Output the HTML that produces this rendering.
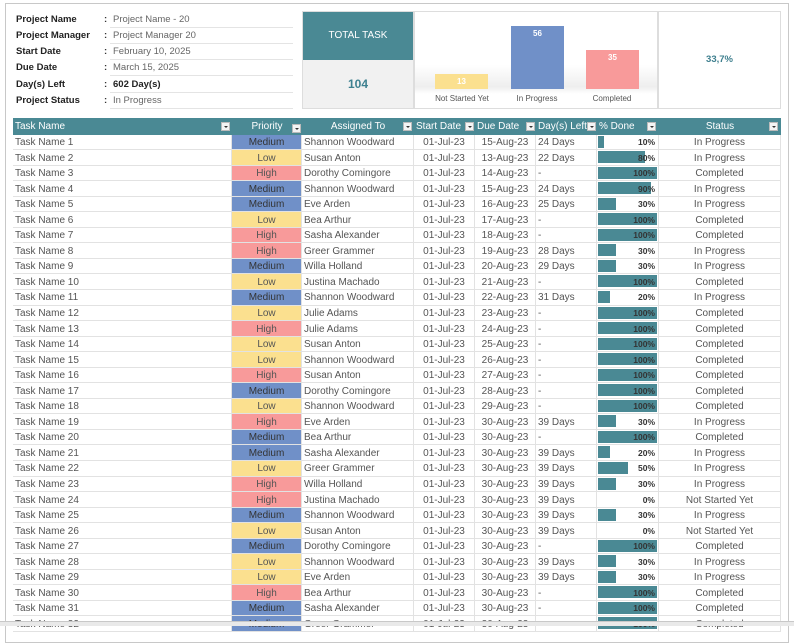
<!DOCTYPE html>
<html><head><meta charset="utf-8"><style>
*{box-sizing:border-box;margin:0;padding:0}
body{width:794px;height:626px;background:#fff;font-family:"Liberation Sans",sans-serif;overflow:hidden;position:relative;color:#555}
.frame{position:absolute;left:5px;top:3px;width:784px;height:640px;border:1px solid #c8c8c8}
.lab{position:absolute;left:16px;font-weight:bold;color:#222;font-size:9.5px}
.col{position:absolute;left:104px;font-weight:bold;color:#333;font-size:9.5px}
.val{position:absolute;left:113px;color:#666;font-size:9.5px}
.ul{position:absolute;left:110px;width:183px;height:1px;background:#e4e4e4}
.tt{position:absolute;left:302px;top:11px;width:112px;height:98px;border:1px solid #ddd}
.tt .a{height:48px;background:#4a8994;color:#fff;font-size:10px;text-align:center;line-height:48px}
.tt .b{height:48px;background:#f1f1f1;color:#3e8190;font-weight:bold;font-size:12px;text-align:center;line-height:48px}
.ch{position:absolute;left:414px;top:11px;width:244px;height:98px;border:1px solid #ddd;background:linear-gradient(#fff 55%,#eee 78%,#fff 85%)}
.bar{position:absolute;color:#fff;font-size:8px;font-weight:bold;text-align:center;padding-top:3px}
.bl{position:absolute;top:82px;font-size:8px;color:#555;text-align:center;width:80px}
.pc{position:absolute;left:658px;top:11px;width:123px;height:98px;border:1px solid #ddd;color:#3e7f8e;font-weight:bold;font-size:9.5px;text-align:center;line-height:96px}
.tbl{position:absolute;left:13px;top:118px;width:768px}
.hd{height:16.5px;background:#4a8994;color:#fff;font-size:10px;display:flex;position:relative}
.hd div{line-height:17px;position:relative}
.dd{position:absolute;top:4px;width:9px;height:9px;background:#f4f4f4;border:1px solid #bbb}
.dd:after{content:"";position:absolute;left:2px;top:3px;border:2px solid transparent;border-top:2.5px solid #333}
.r{height:15.55px;display:flex;font-size:10px;border-bottom:1px solid #e2e2e2;line-height:15px;color:#555}
.r div{border-right:1px solid #e2e2e2;white-space:nowrap;overflow:hidden;padding-top:0.5px}
.c1{width:219px;padding-left:2px}.c2{width:70px;text-align:center}.c3{width:112px;padding-left:2px}.c4{width:61px;text-align:center}.c5{width:61px;text-align:center}.c6{width:61px;padding-left:2px}.c7{width:62px;position:relative;text-align:right;padding-right:3px;font-weight:bold;color:#333;font-size:8.5px}.c8{width:122px;text-align:center}
.M{background:#7090c8;color:#333}.L{background:#fbe08f}.H{background:#f89a9a}
.c7 i{position:absolute;left:1px;top:1px;height:12px;background:#4a8994}
.c7 span{position:relative}
</style></head><body>
<div class="frame"></div>
<div class="lab" style="top:14px">Project Name</div><div class="col" style="top:14px">:</div><div class="val" style="top:14px">Project Name - 20</div><div class="ul" style="top:27px"></div>
<div class="lab" style="top:30px">Project Manager</div><div class="col" style="top:30px">:</div><div class="val" style="top:30px">Project Manager 20</div><div class="ul" style="top:43px"></div>
<div class="lab" style="top:46px">Start Date</div><div class="col" style="top:46px">:</div><div class="val" style="top:46px">February 10, 2025</div><div class="ul" style="top:59px"></div>
<div class="lab" style="top:62px">Due Date</div><div class="col" style="top:62px">:</div><div class="val" style="top:62px">March 15, 2025</div><div class="ul" style="top:75px"></div>
<div class="lab" style="top:79px">Day(s) Left</div><div class="col" style="top:79px">:</div><div class="val" style="top:79px;font-weight:bold;color:#222">602 Day(s)</div><div class="ul" style="top:92px"></div>
<div class="lab" style="top:95px">Project Status</div><div class="col" style="top:95px">:</div><div class="val" style="top:95px">In Progress</div><div class="ul" style="top:108px"></div>
<div class="tt"><div class="a">TOTAL TASK</div><div class="b">104</div></div>
<div class="ch">
<div class="bar" style="left:20px;top:62px;width:53px;height:15px;background:#fbe08f">13</div>
<div class="bar" style="left:96px;top:14px;width:53px;height:63px;background:#7090c8">56</div>
<div class="bar" style="left:171px;top:38px;width:53px;height:39px;background:#f89a9a">35</div>
<div class="bl" style="left:7px">Not Started Yet</div>
<div class="bl" style="left:82px">In Progress</div>
<div class="bl" style="left:157px">Completed</div>
</div>
<div class="pc">33,7%</div>
<div class="tbl">
<div class="hd">
<div style="width:219px;padding-left:2px">Task Name<span class="dd" style="left:208px"></span></div>
<div style="width:70px;text-align:center">Priority<span class="dd" style="left:60px;top:6px"></span></div>
<div style="width:112px;text-align:center">Assigned To<span class="dd" style="left:101px"></span></div>
<div style="width:61px;padding-left:2px">Start Date<span class="dd" style="left:51px"></span></div>
<div style="width:61px;padding-left:2px">Due Date<span class="dd" style="left:51px"></span></div>
<div style="width:61px;padding-left:2px">Day(s) Left<span class="dd" style="left:51px"></span></div>
<div style="width:62px;padding-left:2px">% Done<span class="dd" style="left:50px"></span></div>
<div style="width:122px;text-align:center">Status<span class="dd" style="left:110px"></span></div>
</div>
<div class="r"><div class="c1">Task Name 1</div><div class="c2 M">Medium</div><div class="c3">Shannon Woodward</div><div class="c4">01-Jul-23</div><div class="c5">15-Aug-23</div><div class="c6">24 Days</div><div class="c7"><i style="width:6px"></i><span>10%</span></div><div class="c8">In Progress</div></div>
<div class="r"><div class="c1">Task Name 2</div><div class="c2 L">Low</div><div class="c3">Susan Anton</div><div class="c4">01-Jul-23</div><div class="c5">13-Aug-23</div><div class="c6">22 Days</div><div class="c7"><i style="width:47px"></i><span>80%</span></div><div class="c8">In Progress</div></div>
<div class="r"><div class="c1">Task Name 3</div><div class="c2 H">High</div><div class="c3">Dorothy Comingore</div><div class="c4">01-Jul-23</div><div class="c5">14-Aug-23</div><div class="c6">-</div><div class="c7"><i style="width:59px"></i><span>100%</span></div><div class="c8">Completed</div></div>
<div class="r"><div class="c1">Task Name 4</div><div class="c2 M">Medium</div><div class="c3">Shannon Woodward</div><div class="c4">01-Jul-23</div><div class="c5">15-Aug-23</div><div class="c6">24 Days</div><div class="c7"><i style="width:53px"></i><span>90%</span></div><div class="c8">In Progress</div></div>
<div class="r"><div class="c1">Task Name 5</div><div class="c2 M">Medium</div><div class="c3">Eve Arden</div><div class="c4">01-Jul-23</div><div class="c5">16-Aug-23</div><div class="c6">25 Days</div><div class="c7"><i style="width:18px"></i><span>30%</span></div><div class="c8">In Progress</div></div>
<div class="r"><div class="c1">Task Name 6</div><div class="c2 L">Low</div><div class="c3">Bea Arthur</div><div class="c4">01-Jul-23</div><div class="c5">17-Aug-23</div><div class="c6">-</div><div class="c7"><i style="width:59px"></i><span>100%</span></div><div class="c8">Completed</div></div>
<div class="r"><div class="c1">Task Name 7</div><div class="c2 H">High</div><div class="c3">Sasha Alexander</div><div class="c4">01-Jul-23</div><div class="c5">18-Aug-23</div><div class="c6">-</div><div class="c7"><i style="width:59px"></i><span>100%</span></div><div class="c8">Completed</div></div>
<div class="r"><div class="c1">Task Name 8</div><div class="c2 H">High</div><div class="c3">Greer Grammer</div><div class="c4">01-Jul-23</div><div class="c5">19-Aug-23</div><div class="c6">28 Days</div><div class="c7"><i style="width:18px"></i><span>30%</span></div><div class="c8">In Progress</div></div>
<div class="r"><div class="c1">Task Name 9</div><div class="c2 M">Medium</div><div class="c3">Willa Holland</div><div class="c4">01-Jul-23</div><div class="c5">20-Aug-23</div><div class="c6">29 Days</div><div class="c7"><i style="width:18px"></i><span>30%</span></div><div class="c8">In Progress</div></div>
<div class="r"><div class="c1">Task Name 10</div><div class="c2 L">Low</div><div class="c3">Justina Machado</div><div class="c4">01-Jul-23</div><div class="c5">21-Aug-23</div><div class="c6">-</div><div class="c7"><i style="width:59px"></i><span>100%</span></div><div class="c8">Completed</div></div>
<div class="r"><div class="c1">Task Name 11</div><div class="c2 M">Medium</div><div class="c3">Shannon Woodward</div><div class="c4">01-Jul-23</div><div class="c5">22-Aug-23</div><div class="c6">31 Days</div><div class="c7"><i style="width:12px"></i><span>20%</span></div><div class="c8">In Progress</div></div>
<div class="r"><div class="c1">Task Name 12</div><div class="c2 L">Low</div><div class="c3">Julie Adams</div><div class="c4">01-Jul-23</div><div class="c5">23-Aug-23</div><div class="c6">-</div><div class="c7"><i style="width:59px"></i><span>100%</span></div><div class="c8">Completed</div></div>
<div class="r"><div class="c1">Task Name 13</div><div class="c2 H">High</div><div class="c3">Julie Adams</div><div class="c4">01-Jul-23</div><div class="c5">24-Aug-23</div><div class="c6">-</div><div class="c7"><i style="width:59px"></i><span>100%</span></div><div class="c8">Completed</div></div>
<div class="r"><div class="c1">Task Name 14</div><div class="c2 L">Low</div><div class="c3">Susan Anton</div><div class="c4">01-Jul-23</div><div class="c5">25-Aug-23</div><div class="c6">-</div><div class="c7"><i style="width:59px"></i><span>100%</span></div><div class="c8">Completed</div></div>
<div class="r"><div class="c1">Task Name 15</div><div class="c2 L">Low</div><div class="c3">Shannon Woodward</div><div class="c4">01-Jul-23</div><div class="c5">26-Aug-23</div><div class="c6">-</div><div class="c7"><i style="width:59px"></i><span>100%</span></div><div class="c8">Completed</div></div>
<div class="r"><div class="c1">Task Name 16</div><div class="c2 H">High</div><div class="c3">Susan Anton</div><div class="c4">01-Jul-23</div><div class="c5">27-Aug-23</div><div class="c6">-</div><div class="c7"><i style="width:59px"></i><span>100%</span></div><div class="c8">Completed</div></div>
<div class="r"><div class="c1">Task Name 17</div><div class="c2 M">Medium</div><div class="c3">Dorothy Comingore</div><div class="c4">01-Jul-23</div><div class="c5">28-Aug-23</div><div class="c6">-</div><div class="c7"><i style="width:59px"></i><span>100%</span></div><div class="c8">Completed</div></div>
<div class="r"><div class="c1">Task Name 18</div><div class="c2 L">Low</div><div class="c3">Shannon Woodward</div><div class="c4">01-Jul-23</div><div class="c5">29-Aug-23</div><div class="c6">-</div><div class="c7"><i style="width:59px"></i><span>100%</span></div><div class="c8">Completed</div></div>
<div class="r"><div class="c1">Task Name 19</div><div class="c2 H">High</div><div class="c3">Eve Arden</div><div class="c4">01-Jul-23</div><div class="c5">30-Aug-23</div><div class="c6">39 Days</div><div class="c7"><i style="width:18px"></i><span>30%</span></div><div class="c8">In Progress</div></div>
<div class="r"><div class="c1">Task Name 20</div><div class="c2 M">Medium</div><div class="c3">Bea Arthur</div><div class="c4">01-Jul-23</div><div class="c5">30-Aug-23</div><div class="c6">-</div><div class="c7"><i style="width:59px"></i><span>100%</span></div><div class="c8">Completed</div></div>
<div class="r"><div class="c1">Task Name 21</div><div class="c2 M">Medium</div><div class="c3">Sasha Alexander</div><div class="c4">01-Jul-23</div><div class="c5">30-Aug-23</div><div class="c6">39 Days</div><div class="c7"><i style="width:12px"></i><span>20%</span></div><div class="c8">In Progress</div></div>
<div class="r"><div class="c1">Task Name 22</div><div class="c2 L">Low</div><div class="c3">Greer Grammer</div><div class="c4">01-Jul-23</div><div class="c5">30-Aug-23</div><div class="c6">39 Days</div><div class="c7"><i style="width:30px"></i><span>50%</span></div><div class="c8">In Progress</div></div>
<div class="r"><div class="c1">Task Name 23</div><div class="c2 H">High</div><div class="c3">Willa Holland</div><div class="c4">01-Jul-23</div><div class="c5">30-Aug-23</div><div class="c6">39 Days</div><div class="c7"><i style="width:18px"></i><span>30%</span></div><div class="c8">In Progress</div></div>
<div class="r"><div class="c1">Task Name 24</div><div class="c2 H">High</div><div class="c3">Justina Machado</div><div class="c4">01-Jul-23</div><div class="c5">30-Aug-23</div><div class="c6">39 Days</div><div class="c7"><span>0%</span></div><div class="c8">Not Started Yet</div></div>
<div class="r"><div class="c1">Task Name 25</div><div class="c2 M">Medium</div><div class="c3">Shannon Woodward</div><div class="c4">01-Jul-23</div><div class="c5">30-Aug-23</div><div class="c6">39 Days</div><div class="c7"><i style="width:18px"></i><span>30%</span></div><div class="c8">In Progress</div></div>
<div class="r"><div class="c1">Task Name 26</div><div class="c2 L">Low</div><div class="c3">Susan Anton</div><div class="c4">01-Jul-23</div><div class="c5">30-Aug-23</div><div class="c6">39 Days</div><div class="c7"><span>0%</span></div><div class="c8">Not Started Yet</div></div>
<div class="r"><div class="c1">Task Name 27</div><div class="c2 M">Medium</div><div class="c3">Dorothy Comingore</div><div class="c4">01-Jul-23</div><div class="c5">30-Aug-23</div><div class="c6">-</div><div class="c7"><i style="width:59px"></i><span>100%</span></div><div class="c8">Completed</div></div>
<div class="r"><div class="c1">Task Name 28</div><div class="c2 L">Low</div><div class="c3">Shannon Woodward</div><div class="c4">01-Jul-23</div><div class="c5">30-Aug-23</div><div class="c6">39 Days</div><div class="c7"><i style="width:18px"></i><span>30%</span></div><div class="c8">In Progress</div></div>
<div class="r"><div class="c1">Task Name 29</div><div class="c2 L">Low</div><div class="c3">Eve Arden</div><div class="c4">01-Jul-23</div><div class="c5">30-Aug-23</div><div class="c6">39 Days</div><div class="c7"><i style="width:18px"></i><span>30%</span></div><div class="c8">In Progress</div></div>
<div class="r"><div class="c1">Task Name 30</div><div class="c2 H">High</div><div class="c3">Bea Arthur</div><div class="c4">01-Jul-23</div><div class="c5">30-Aug-23</div><div class="c6">-</div><div class="c7"><i style="width:59px"></i><span>100%</span></div><div class="c8">Completed</div></div>
<div class="r"><div class="c1">Task Name 31</div><div class="c2 M">Medium</div><div class="c3">Sasha Alexander</div><div class="c4">01-Jul-23</div><div class="c5">30-Aug-23</div><div class="c6">-</div><div class="c7"><i style="width:59px"></i><span>100%</span></div><div class="c8">Completed</div></div>
<div class="r"><div class="c1">Task Name 32</div><div class="c2 M">Medium</div><div class="c3">Greer Grammer</div><div class="c4">01-Jul-23</div><div class="c5">30-Aug-23</div><div class="c6">-</div><div class="c7"><i style="width:59px"></i><span>100%</span></div><div class="c8">Completed</div></div>
</div>
<div style="position:absolute;left:0;top:621px;width:794px;height:5px;background:#e9e9e9;border-top:1px solid #c8c8c8"></div>
</body></html>
